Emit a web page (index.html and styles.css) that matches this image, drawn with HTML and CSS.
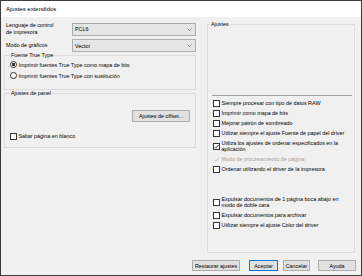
FILE: index.html
```html
<!DOCTYPE html>
<html lang="es">
<head>
  <meta charset="UTF-8">
  <title>Ajustes extendidos</title>
  <link rel="stylesheet" href="styles.css">
</head>
<body>
  <div class="dialog">
    <div class="titlebar">Ajustes extendidos</div>

    <div class="main">
      <div class="left">
        <div class="field">
          <label class="field-label">Lenguaje de control<br>de impresora</label>
          <div class="combo">
            <span>PCL6</span>
            <svg class="chev" viewBox="0 0 5 3"><path d="M0.5 0.5 L2.5 2.5 L4.5 0.5"/></svg>
          </div>
        </div>
        <div class="field">
          <label class="field-label">Modo de gráficos</label>
          <div class="combo">
            <span>Vector</span>
            <svg class="chev" viewBox="0 0 5 3"><path d="M0.5 0.5 L2.5 2.5 L4.5 0.5"/></svg>
          </div>
        </div>

        <fieldset class="group group-font">
          <legend>Fuente True Type</legend>
          <div class="opt"><span class="radio checked"></span>Imprimir fuentes True Type como mapa de bits</div>
          <div class="opt"><span class="radio"></span>Imprimir fuentes True Type con sustitución</div>
        </fieldset>

        <fieldset class="group group-panel">
          <legend>Ajustes de panel</legend>
          <div class="btn-row"><button class="btn btn-offset">Ajustes de offset...</button></div>
          <div class="check"><span class="box"></span>Saltar página en blanco</div>
        </fieldset>
      </div>

      <fieldset class="group settings">
        <legend>Ajustes</legend>
        <div class="preview"></div>
        <div class="sep"></div>
        <div class="check"><span class="box"></span>Siempre procesar con tipo de datos RAW</div>
        <div class="check"><span class="box"></span>Imprimir como mapa de bits</div>
        <div class="check"><span class="box"></span>Mejorar patrón de sombreado</div>
        <div class="check"><span class="box"></span>Utilizar siempre el ajuste Fuente de papel del driver</div>
        <div class="check multi">
          <span class="box"><svg viewBox="0 0 7 7"><path d="M1.3 3.6 L2.9 5.2 L5.8 1.8"/></svg></span>
          <span>Utiliza los ajustes de ordenar especificados en la<br>aplicación</span>
        </div>
        <div class="check disabled">
          <span class="box"><svg viewBox="0 0 7 7"><path d="M1.3 3.6 L2.9 5.2 L5.8 1.8"/></svg></span>
          Modo de procesamiento de página
        </div>
        <div class="check"><span class="box"></span>Ordenar utilizando el driver de la impresora</div>
        <div class="check multi spaced">
          <span class="box"></span>
          <span>Expulsar documentos de 1 página boca abajo en<br>modo de doble cara</span>
        </div>
        <div class="check"><span class="box"></span>Expulsar documentos para archivar</div>
        <div class="check"><span class="box"></span>Utilizar siempre el ajuste Color del driver</div>
      </fieldset>
    </div>

    <div class="footer">
      <button class="btn btn-restore">Restaurar ajustes</button>
      <button class="btn btn-ok">Aceptar</button>
      <button class="btn btn-cancel">Cancelar</button>
      <button class="btn btn-help">Ayuda</button>
    </div>
  </div>
</body>
</html>
```

FILE: styles.css
```css
:root {
  --face: #f0f0f0;
  --frame: #3c3c3c;
  --group-line: #dcdcdc;
  --ctl-bg: #e1e1e1;
  --ctl-border: #adadad;
  --accent: #0078d7;
  --ink: #000000;
  --muted: #a0a0a0;
}
body {
  margin: 0;
  font-family: "Liberation Sans", Arial, sans-serif;
  font-size: 5.4px;
  color: var(--ink);
  background: #ffffff;
}
.dialog {
  box-sizing: border-box;
  width: 362px;
  height: 276px;
  border: 1px solid var(--frame);
  background: var(--face);
  display: flex;
  flex-direction: column;
}
.titlebar {
  flex: none;
  height: 16px;
  line-height: 16px;
  padding-left: 5px;
  background: #ffffff;
  font-size: 6px;
}
.main {
  flex: 1;
  min-height: 0;
  display: flex;
  padding: 0 5px 0 3px;
}
.left {
  width: 192px;
  padding-top: 5px;
}
.field {
  display: flex;
  align-items: center;
  padding-left: 2px;
}
.field + .field {
  margin-top: 3px;
}
.field-label {
  flex: 0 0 66px;
  line-height: 7px;
}
.combo {
  flex: 1;
  box-sizing: border-box;
  height: 13px;
  display: flex;
  align-items: center;
  justify-content: space-between;
  padding: 0 3px 0 2px;
  border: 1px solid var(--ctl-border);
  background: #e5e5e5;
}
.chev {
  width: 5px;
  height: 3px;
  fill: none;
  stroke: #606060;
  stroke-width: 0.7;
}
.group {
  margin: 0;
  padding: 0;
  min-width: 0;
  border: 1px solid var(--group-line);
}
.group legend {
  margin-left: 5px;
  padding: 0 1px;
  line-height: 7px;
}
.group-font {
  padding-bottom: 8px;
}
.opt {
  display: flex;
  align-items: center;
  height: 11px;
  padding-left: 5px;
}
.radio {
  box-sizing: border-box;
  width: 7px;
  height: 7px;
  margin-right: 1.5px;
  border: 1px solid #333333;
  border-radius: 50%;
  background: #ffffff;
}
.radio.checked {
  background: radial-gradient(circle, #333333 1.4px, #ffffff 1.9px);
}
.group-panel {
  padding-bottom: 6px;
}
.btn-row {
  display: flex;
  justify-content: flex-end;
  margin-top: 13px;
  padding-right: 5px;
}
.group-panel .check {
  margin-top: 9px;
}
.check {
  display: flex;
  align-items: center;
  min-height: 10px;
  padding-left: 5px;
  line-height: 6px;
  white-space: nowrap;
}
.check.multi {
  padding-top: 2px;
  padding-bottom: 2px;
}
.check.spaced {
  margin-top: 20px;
}
.box {
  box-sizing: border-box;
  flex: none;
  width: 7px;
  height: 7px;
  margin-right: 1.5px;
  border: 1px solid #333333;
  background: #ffffff;
}
.box svg {
  display: block;
  width: 7px;
  height: 7px;
  margin: -1px;
  fill: none;
  stroke: #333333;
  stroke-width: 0.9;
}
.check.disabled {
  color: var(--muted);
}
.check.disabled .box {
  border-color: transparent;
  background: transparent;
}
.check.disabled .box svg {
  stroke: #b8b8b8;
}
.settings {
  flex: none;
  box-sizing: border-box;
  width: 148px;
  margin: 4px 0 1px 11px;
}
.settings legend {
  margin-left: 2px;
}
.preview {
  height: 67px;
}
.sep {
  height: 1px;
  margin: 0 2px 2px 4px;
  background: var(--muted);
}
.btn {
  box-sizing: border-box;
  height: 12px;
  padding: 0;
  border: 1px solid var(--ctl-border);
  background: var(--ctl-bg);
  font: inherit;
  color: var(--ink);
}
.btn-offset {
  width: 58px;
}
.footer {
  flex: none;
  height: 21px;
  box-sizing: border-box;
  display: flex;
  justify-content: flex-end;
  align-items: flex-start;
  padding: 6px 5px 0 0;
}
.footer .btn {
  height: 11px;
}
.btn-restore {
  width: 48px;
  margin-right: 9px;
}
.btn-ok {
  width: 29px;
  margin-right: 5px;
  border-color: var(--accent);
}
.btn-cancel {
  width: 27px;
  margin-right: 8px;
}
.btn-help {
  width: 38px;
}
```
